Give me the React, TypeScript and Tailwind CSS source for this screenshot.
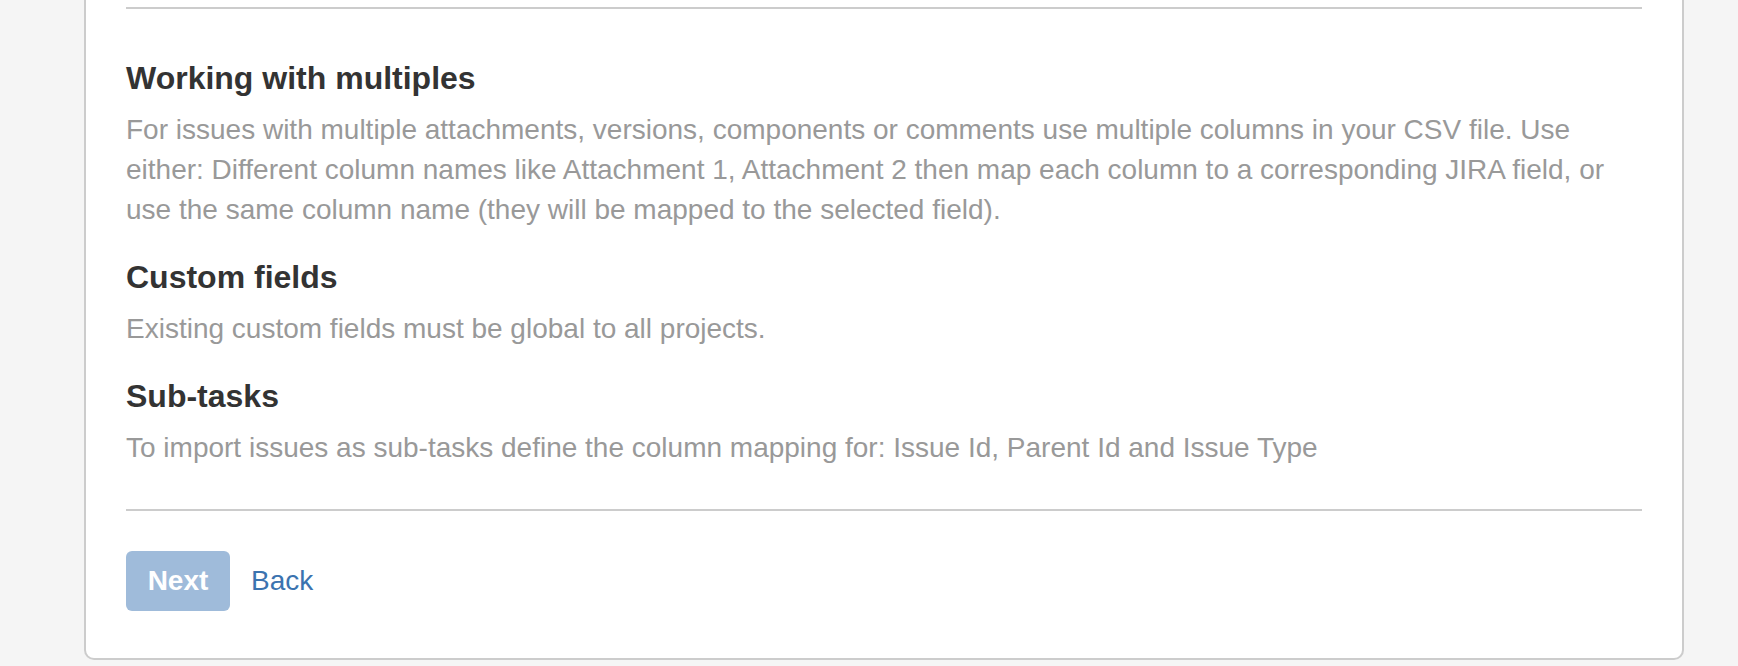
import React from 'react';

const SECTIONS = [
  {
    title: 'Working with multiples',
    text: 'For issues with multiple attachments, versions, components or comments use multiple columns in your CSV file. Use either: Different column names like Attachment 1, Attachment 2 then map each column to a corresponding JIRA field, or use the same column name (they will be mapped to the selected field).',
  },
  {
    title: 'Custom fields',
    text: 'Existing custom fields must be global to all projects.',
  },
  {
    title: 'Sub-tasks',
    text: 'To import issues as sub-tasks define the column mapping for: Issue Id, Parent Id and Issue Type',
  },
];

export default function App() {
  return (
    <div className="min-h-[666px] bg-[#f5f5f5] font-['Liberation_Sans',Arial,sans-serif]">
      <div className="ml-[84px] w-[1600px] bg-white border-x-2 border-b-2 border-[#cccccc] rounded-b-[10px] px-[40px] pt-[7px] pb-[47px]">
        <hr className="border-0 border-t-2 border-[#cccccc]" />

        <div className="pt-[22px]">
          {SECTIONS.map((s) => (
            <section key={s.title} className="mt-[27px]">
              <h3 className="text-[32px] leading-[40px] font-bold text-[#333333]">{s.title}</h3>
              <p className="mt-[12px] text-[28px] leading-[40px] text-[#999999]">{s.text}</p>
            </section>
          ))}
        </div>

        <hr className="mt-[41px] border-0 border-t-2 border-[#cccccc]" />

        {/* buttons */}
        <div className="mt-[40px] flex items-center gap-[21px]">
          <button
            type="button"
            disabled
            className="h-[60px] w-[104px] rounded-[6px] bg-[#9fbbda] text-[28px] font-bold text-white"
          >
            Next
          </button>
          <a href="#" className="text-[28px] leading-[40px] text-[#3b73af]">
            Back
          </a>
        </div>
      </div>
    </div>
  );
}
